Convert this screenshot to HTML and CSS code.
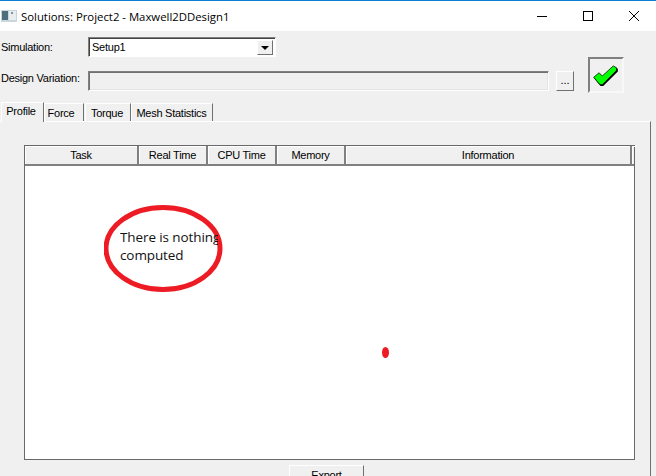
FILE: index.html
```html
<!DOCTYPE html>
<html lang="en">
<head>
<meta charset="utf-8">
<title>Solutions</title>
<link rel="stylesheet" href="styles.css">
</head>
<body>
<div class="window">
  <header class="titlebar">
    <svg class="appicon" width="16" height="16" viewBox="0 0 16 16"><rect x="0" y="2" width="16" height="12" fill="#c9d6dc"/><rect x="1" y="3" width="6" height="9" fill="#4d6f7d"/><rect x="8" y="3" width="7" height="9" fill="#e8eef0"/><rect x="10" y="4" width="2" height="2" fill="#7d97a3"/></svg>
    <span class="title">Solutions: Project2 - Maxwell2DDesign1</span>
    <div class="winbtns">
      <svg width="46" height="30" viewBox="0 0 46 30"><path d="M18 15.5h10" stroke="#000" fill="none"/></svg>
      <svg width="46" height="30" viewBox="0 0 46 30"><rect x="18.5" y="10.5" width="9" height="9" stroke="#000" fill="none"/></svg>
      <svg width="46" height="30" viewBox="0 0 46 30"><path d="M18 10l10 10M28 10l-10 10" stroke="#000" fill="none"/></svg>
    </div>
  </header>
  <section class="form">
    <div class="fields">
      <div class="row row-sim">
        <label class="label">Simulation:</label>
        <div class="select"><span class="select-text">Setup1</span><span class="select-btn"><i class="arrow"></i></span></div>
      </div>
      <div class="row row-var">
        <label class="label label-var">Design Variation:</label>
        <div class="input"></div>
        <button class="dots">...</button>
      </div>
    </div>
    <div class="okbox">
      <svg width="25" height="21" viewBox="0 0 27 23"><path d="M1 14.5L7 9.5 10.5 13 23 2l4 2v3L11 23H8z" fill="#000"/><path d="M.5 13.5L6.5 8.5 10 12 22 1l3.500 2v3L10 21.500H7.500z" fill="#00ff00" stroke="#000" stroke-width=".8"/></svg>
    </div>
  </section>
  <nav class="tabs">
    <span class="tab tab-active">Profile</span>
    <span class="tab tab-force">Force</span>
    <span class="tab tab-torque">Torque</span>
    <span class="tab tab-mesh">Mesh Statistics</span>
  </nav>
  <main class="panel">
    <div class="list">
      <div class="thead">
        <div class="th col-task">Task</div>
        <div class="th col-time">Real Time</div>
        <div class="th col-time">CPU Time</div>
        <div class="th col-time">Memory</div>
        <div class="th col-info">Information</div>
        <div class="th col-rest"></div>
      </div>
      <div class="note">
        <svg class="ring" width="120" height="88" viewBox="0 0 120 88"><ellipse cx="59" cy="43.500" rx="57" ry="41" fill="none" stroke="#ed1c24" stroke-width="5"/></svg>
        <p class="note-text">There is nothing<br>computed</p>
      </div>
      <span class="dot"></span>
    </div>
    <div class="actions"><button class="export">Export</button></div>
  </main>
</div>
</body>
</html>
```

FILE: styles.css
```css
* { box-sizing: border-box; }
html, body { margin: 0; padding: 0; }
body { width: 656px; height: 476px; overflow: hidden; background: #f0f0f0; font-family: "Liberation Sans", Arial, sans-serif; font-size: 11px; letter-spacing: -0.25px; color: #000; }
.window { width: 656px; height: 476px; overflow: hidden; }
.titlebar { height: 31px; background: #fff; border-top: 1px solid #0f7fd6; display: flex; align-items: center; padding-left: 1px; }
.appicon { flex: none; }
.title { margin-left: 4px; font-family: "Open Sans", sans-serif; font-size: 11.35px; letter-spacing: 0; color: #000; }
.winbtns { margin-left: auto; display: flex; margin-right: -1px; }
.form { display: flex; height: 61px; padding-top: 5px; }
.fields { width: 580px; }
.row { display: flex; align-items: center; }
.label { width: 88px; padding-left: 1px; flex: none; }
.label-var { padding-bottom: 6px; }
.row-sim { height: 20px; margin-top: 1px; }
.row-var { height: 21px; margin-top: 13px; }
.select { width: 188px; height: 20px; display: flex; justify-content: space-between; background: #fff; border: 1px solid; border-color: #808080 #fff #fff #808080; box-shadow: inset 1px 1px 0 #404040; padding: 2px 2px 1px 3px; }
.select-text { line-height: 14px; }
.select-btn { width: 16px; background: #f0f0f0; border: 1px solid; border-color: #fff #707070 #707070 #fff; display: flex; align-items: center; justify-content: center; }
.arrow { width: 0; height: 0; border: 4px solid transparent; border-top: 4px solid #000; border-bottom: 0; }
.input { width: 461px; height: 20px; border: 1px solid; border-color: #808080 #fff #fff #808080; box-shadow: inset 1px 1px 0 #707070, inset -1px -1px 0 #e3e3e3; }
.dots { width: 18px; height: 20px; margin-left: 7px; padding: 0 0 2px; background: #f0f0f0; border: 1px solid; border-color: #fff #707070 #707070 #fff; font: 11px "Liberation Sans", sans-serif; line-height: 16px; }
.okbox { width: 36px; height: 36px; margin-left: 8px; margin-top: 21px; border: 2px solid; border-color: #808080 #f8f8f8 #f8f8f8 #808080; display: flex; align-items: center; justify-content: center; padding-right: 2px; }
.tabs { display: flex; height: 29px; padding-left: 1px; align-items: flex-end; }
.tab { height: 18px; padding-top: 3px; text-align: center; border: 1px solid; border-color: #fff #707070 transparent #fff; border-bottom: 0; }
.tab-active { width: 43px; height: 20px; padding: 2px 3px 0 0; margin-bottom: -1px; background: #f0f0f0; position: relative; }
.tab-force { width: 40px; margin-right: 1px; padding-right: 6px; }
.tab-torque { width: 46px; padding-right: 2px; }
.tab-mesh { width: 82px; padding-right: 1px; }
.panel { height: 360px; margin-right: 5px; border-top: 1px solid #fff; border-right: 1px solid #707070; padding: 23px 15px 0 24px; }
.list { position: relative; height: 315px; width: 611px; background: #fff; border: 1px solid #696969; }
.thead { display: flex; height: 20px; background: #f0f0f0; border-bottom: 2px solid #808080; }
.th { height: 18px; line-height: 19px; text-align: center; border-right: 2px solid #808080; box-shadow: inset 1px 1px 0 #fff; flex: none; }
.col-task { width: 114px; }
.col-time { width: 69px; }
.col-info { width: 286px; }
.col-rest { width: 4px; border-right: 0; }
.note { position: absolute; left: 79px; top: 59px; width: 120px; height: 88px; }
.ring { display: block; }
.note-text { position: absolute; left: 16px; top: 23px; width: 98px; margin: 0; overflow: hidden; white-space: nowrap; font-family: "Open Sans", sans-serif; font-size: 13.5px; letter-spacing: -0.1px; line-height: 18px; color: #111; }
.dot { position: absolute; left: 357px; top: 201px; width: 7px; height: 11px; border-radius: 50%; background: #ed1c24; }
.actions { display: flex; justify-content: center; margin-top: 5px; padding-right: 6px; }
.export { width: 75px; height: 24px; padding: 0 0 4px; background: #f0f0f0; border: 1px solid; border-color: #fff #707070 #707070 #fff; font: 11px "Liberation Sans", sans-serif; letter-spacing: -0.25px; }
```
